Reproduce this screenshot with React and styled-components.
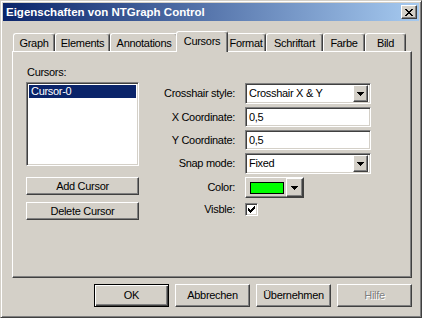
import React from 'react';
import styled, { createGlobalStyle, css } from 'styled-components';

const Global = createGlobalStyle`
  html, body { margin: 0; padding: 0; background: #d4d0c8; }
  body { font-family: "Liberation Sans", Arial, sans-serif; font-size: 11px; letter-spacing: -0.3px; color: #000; }
  * { box-sizing: border-box; }
`;

const raised = css`
  border: 1px solid;
  border-color: #fff #404040 #404040 #fff;
  box-shadow: inset -1px -1px #808080;
`;

const sunken = css`
  border: 1px solid;
  border-color: #808080 #fff #fff #808080;
  box-shadow: inset 1px 1px #404040, inset -1px -1px #d4d0c8;
`;

const Window = styled.div`
  width: 422px;
  height: 318px;
  background: #d4d0c8;
  border: 1px solid;
  border-color: #d4d0c8 #404040 #404040 #d4d0c8;
  box-shadow: inset 1px 1px #fff, inset -1px -1px #808080;
  padding: 2px;
  display: flex;
  flex-direction: column;
`;

const TitleBar = styled.div`
  height: 18px;
  background: linear-gradient(to right, #0a246a, #a6caf0);
  display: flex;
  align-items: center;
  justify-content: space-between;
  padding: 0 2px 0 3px;
`;

const Title = styled.span`
  color: #fff;
  font-weight: bold;
  font-size: 11.5px;
  letter-spacing: 0;
  line-height: 14px;
`;

const CloseBtn = styled.div`
  width: 16px;
  height: 14px;
  background: #d4d0c8;
  ${raised};
  display: flex;
  align-items: center;
  justify-content: center;
  padding-right: 1px;
`;

const Body = styled.div`
  flex: 1;
  display: flex;
  flex-direction: column;
  padding: 10px 7px 0 9px;
`;

const TabStrip = styled.div`
  height: 20px;
  display: flex;
  align-items: flex-end;
  padding-left: 1px;
`;

const Tab = styled.div`
  width: ${p => p.$w}px;
  height: 18px;
  flex: none;
  background: #d4d0c8;
  border-top: 1px solid #fff;
  border-left: 1px solid #fff;
  border-right: 1px solid #404040;
  box-shadow: inset -1px 0 #808080;
  border-radius: 3px 3px 0 0;
  display: flex;
  justify-content: center;
  align-items: center;
  padding-top: 1px;
  white-space: nowrap;
  ${p => p.$active && css`
    width: ${p.$w + 4}px;
    height: 21px;
    margin: 0 -2px -1px;
    position: relative;
    z-index: 1;
    padding-top: 0;
    padding-bottom: 3px;
  `}
`;

const Panel = styled.div`
  height: 227px;
  border: 1px solid;
  border-color: #fff #404040 #404040 #fff;
  box-shadow: inset -1px -1px #808080;
  display: flex;
  align-items: flex-start;
`;

const LeftCol = styled.div`
  width: 113px;
  margin-left: 13px;
  padding-top: 14px;
  display: flex;
  flex-direction: column;
`;

const Caption = styled.div`
  line-height: 13px;
  height: 13px;
  padding-left: 1px;
  margin-bottom: 3px;
`;

const ListBox = styled.div`
  height: 84px;
  background: #fff;
  ${sunken};
  padding: 2px;
  margin-bottom: 11px;
`;

const ListItem = styled.div`
  height: 13px;
  line-height: 13px;
  padding-left: 2px;
  background: ${p => (p.$selected ? '#0a246a' : 'transparent')};
  color: ${p => (p.$selected ? '#fff' : '#000')};
`;

const Button = styled.div`
  width: ${p => p.$w}px;
  height: ${p => p.$h}px;
  background: #d4d0c8;
  ${raised};
  display: flex;
  align-items: center;
  justify-content: center;
  padding-bottom: 1px;
  color: ${p => (p.$disabled ? '#808080' : '#000')};
  text-shadow: ${p => (p.$disabled ? '1px 1px #fff' : 'none')};
  ${p => p.$default && css`
    border: 1px solid #000;
    box-shadow: inset 1px 1px #fff, inset -1px -1px #404040, inset -2px -2px #808080;
  `}
`;

const ButtonStack = styled.div`
  display: flex;
  flex-direction: column;
  gap: 7px;
`;

const Form = styled.div`
  margin-left: 11px;
  margin-top: 31px;
  display: grid;
  grid-template-columns: 85px 126px;
  column-gap: 10px;
  row-gap: 3px;
`;

const Label = styled.div`
  text-align: right;
  align-self: center;
  white-space: nowrap;
  line-height: 13px;
  margin-top: ${p => p.$mt || 0}px;
`;

const Field = styled.div`
  height: ${p => p.$h}px;
  background: #fff;
  ${sunken};
  display: flex;
  align-items: center;
  padding-left: 3px;
  padding-right: 2px;
  white-space: nowrap;
`;

const FieldText = styled.span`
  flex: 1;
  line-height: 13px;
`;

const DropBtn = styled.div`
  width: ${p => p.$w}px;
  height: ${p => p.$h}px;
  flex: none;
  background: #d4d0c8;
  ${raised};
  display: flex;
  align-items: center;
  justify-content: center;
`;

const ColorButton = styled.div`
  width: 59px;
  height: 21px;
  background: #d4d0c8;
  ${raised};
  display: flex;
  align-items: center;
  padding-left: 4px;
  gap: 2px;
`;

const Swatch = styled.div`
  width: 35px;
  height: 12px;
  background: ${p => p.$color};
  border: 1px solid #000;
`;

const Check = styled.div`
  width: 13px;
  height: 13px;
  background: #fff;
  ${sunken};
  display: flex;
  align-items: center;
  justify-content: center;
  margin-top: ${p => p.$mt || 0}px;
`;

const Footer = styled.div`
  display: flex;
  justify-content: flex-end;
  gap: 6px;
  margin-top: 6px;
`;

const CloseGlyph = () => (
  <svg width="8" height="7" shapeRendering="crispEdges">
    <path d="M0 0h2v1h-2z M6 0h2v1h-2z M1 1h2v1h-2z M5 1h2v1h-2z M2 2h4v1h-4z M3 3h2v1h-2z M2 4h4v1h-4z M1 5h2v1h-2z M5 5h2v1h-2z M0 6h2v1h-2z M6 6h2v1h-2z" fill="#000" />
  </svg>
);

const Arrow = () => (
  <svg width="7" height="4" shapeRendering="crispEdges">
    <path d="M0 0h7v1h-7z M1 1h5v1h-5z M2 2h3v1h-3z M3 3h1v1h-1z" fill="#000" />
  </svg>
);

const CheckMark = () => (
  <svg width="7" height="7" shapeRendering="crispEdges">
    <path d="M6 0h1v1h-1z M5 1h2v1h-2z M0 2h1v1h-1z M4 2h3v1h-3z M0 3h2v1h-2z M3 3h3v1h-3z M0 4h5v1h-5z M1 5h3v1h-3z M2 6h1v1h-1z" fill="#000" />
  </svg>
);

const tabs = [
  { label: 'Graph', w: 42 },
  { label: 'Elements', w: 55 },
  { label: 'Annotations', w: 68 },
  { label: 'Cursors', w: 48 },
  { label: 'Format', w: 40 },
  { label: 'Schriftart', w: 57 },
  { label: 'Farbe', w: 42 },
  { label: 'Bild', w: 41 },
];

const Combo = ({ value }) => (
  <Field $h={21}>
    <FieldText>{value}</FieldText>
    <DropBtn $w={15} $h={17}><Arrow /></DropBtn>
  </Field>
);

export default function App() {
  return (
    <>
      <Global />
      <Window>
        <TitleBar>
          <Title>Eigenschaften von NTGraph Control</Title>
          <CloseBtn><CloseGlyph /></CloseBtn>
        </TitleBar>
        <Body>
          <TabStrip>
            {tabs.map((t, i) => (
              <Tab key={t.label} $w={t.w} $active={i === 3}>{t.label}</Tab>
            ))}
          </TabStrip>
          <Panel>
            <LeftCol>
              <Caption>Cursors:</Caption>
              <ListBox>
                <ListItem $selected>Cursor-0</ListItem>
              </ListBox>
              <ButtonStack>
                <Button $w={113} $h={18}>Add Cursor</Button>
                <Button $w={113} $h={18}>Delete Cursor</Button>
              </ButtonStack>
            </LeftCol>
            <Form>
              <Label>Crosshair style:</Label>
              <Combo value="Crosshair X & Y" />
              <Label>X Coordinate:</Label>
              <Field $h={20}><FieldText>0,5</FieldText></Field>
              <Label>Y Coordinate:</Label>
              <Field $h={20}><FieldText>0,5</FieldText></Field>
              <Label>Snap mode:</Label>
              <Combo value="Fixed" />
              <Label>Color:</Label>
              <ColorButton>
                <Swatch $color="#00ff00" />
                <DropBtn $w={17} $h={19}><Arrow /></DropBtn>
              </ColorButton>
              <Label $mt={2}>Visble:</Label>
              <Check $mt={2}><CheckMark /></Check>
            </Form>
          </Panel>
          <Footer>
            <Button $w={75} $h={23} $default>OK</Button>
            <Button $w={75} $h={23}>Abbrechen</Button>
            <Button $w={75} $h={23}>Übernehmen</Button>
            <Button $w={75} $h={23} $disabled>Hilfe</Button>
          </Footer>
        </Body>
      </Window>
    </>
  );
}
